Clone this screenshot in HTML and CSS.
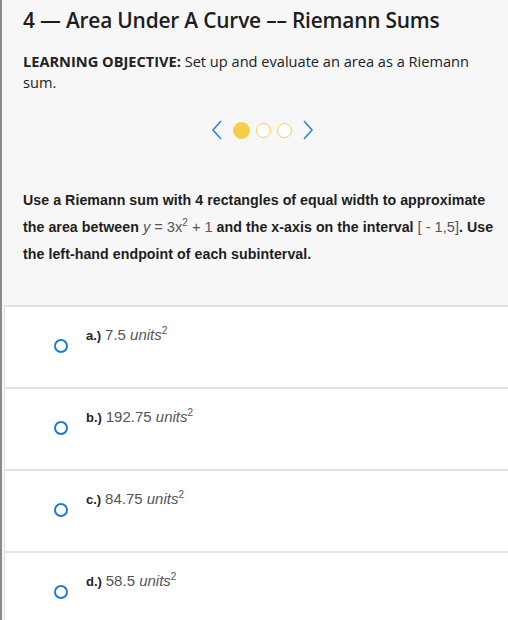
FILE: index.html
```html
<!DOCTYPE html>
<html>
<head>
<meta charset="utf-8">
<link rel="stylesheet" href="styles.css">
</head>
<body>
<div class="page">
  <div class="head">
    <h1 class="title">4 — Area Under A Curve –– Riemann Sums</h1>
    <p class="objective"><b>LEARNING OBJECTIVE:</b> Set up and evaluate an area as a Riemann sum.</p>
    <div class="carousel">
      <svg class="chev" width="12" height="20" viewBox="0 0 12 20"><polyline points="10,1 2,10 10,19" fill="none" stroke="#2a86d8" stroke-width="1.6"/></svg>
      <span class="dot on"></span>
      <span class="dot"></span>
      <span class="dot"></span>
      <svg class="chev" width="12" height="20" viewBox="0 0 12 20"><polyline points="2,1 10,10 2,19" fill="none" stroke="#2a86d8" stroke-width="1.6"/></svg>
    </div>
    <p class="question">Use a Riemann sum with 4 rectangles of equal width to approximate the area between <span class="math"><i>y</i> = 3x<sup>2</sup> + 1</span> and the x-axis on the interval <span class="math">[ - 1,5]</span>. Use the left-hand endpoint of each subinterval.</p>
  </div>
  <div class="options">
    <div class="opt"><span class="radio"></span><span class="lab"><b>a.)</b> <span class="val">7.5 <i>units</i><sup>2</sup></span></span></div>
    <div class="opt"><span class="radio"></span><span class="lab"><b>b.)</b> <span class="val">192.75 <i>units</i><sup>2</sup></span></span></div>
    <div class="opt"><span class="radio"></span><span class="lab"><b>c.)</b> <span class="val">84.75 <i>units</i><sup>2</sup></span></span></div>
    <div class="opt"><span class="radio"></span><span class="lab"><b>d.)</b> <span class="val">58.5 <i>units</i><sup>2</sup></span></span></div>
  </div>
</div>
</body>
</html>
```
FILE: styles.css
```css
html, body { margin: 0; padding: 0; }
body { width: 508px; height: 620px; overflow: hidden; background: #f7f7f7; font-family: "Open Sans", "Liberation Sans", sans-serif; color: #222; }
.page { border-left: 2px solid #8a8a8a; min-height: 620px; }
.head { padding: 8px 12px 0 21px; }
.title { margin: 0; font-size: 20.9px; font-weight: 600; letter-spacing: -0.2px; line-height: 24px; color: #1d1d1d; }
.objective { margin: 19px 8px 0 0; font-size: 14.6px; line-height: 21px; color: #222; }
.objective b { font-weight: 700; }
.carousel { display: flex; align-items: center; justify-content: center; gap: 6px; margin: 27px 0 0; padding-left: 6px; height: 20px; }
.chev { display: block; }
.carousel .chev:first-child { margin-right: 4px; }
.carousel .chev:last-child { margin-left: 4px; }
.dot { width: 15px; height: 15px; border-radius: 50%; border: 1.5px solid #f4d04a; background: #fff; box-sizing: border-box; }
.dot.on { background: #f4d04a; width: 17px; height: 17px; }
.question { margin: 47px 0 0; padding-bottom: 37px; font-family: "Liberation Sans", sans-serif; font-weight: 700; font-size: 14.2px; line-height: 27px; color: #1d1d1d; letter-spacing: 0.05px; }
.math { font-weight: 400; color: #555; font-size: 14.6px; letter-spacing: 0; }
.math sup, .val sup { font-size: 10px; line-height: 10px; vertical-align: 6px; }
.options { background: #fff; border-left: 1px solid #ddd; margin-left: 2px; }
.opt { border-top: 2px solid #e2e2e2; height: 80px; position: relative; }
.radio { position: absolute; left: 49px; top: 32px; width: 14px; height: 14px; border: 2px solid #1a7bd0; border-radius: 50%; box-sizing: border-box; }
.lab { position: absolute; left: 81px; top: 19px; font-family: "Liberation Sans", sans-serif; font-size: 14px; color: #222; }
.lab b { font-size: 13px; }
.val { color: #555; font-size: 15px; }
```
